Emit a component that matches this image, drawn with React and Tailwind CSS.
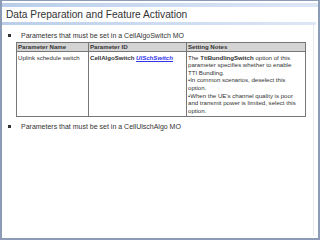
export default function App() {
    return (
        <div className="w-[320px] h-[240px] bg-white font-['Liberation_Sans',Arial,sans-serif] text-[#222] overflow-hidden">
            <div className="relative h-full border-x-2 border-b-2 border-t border-[#8c9cb6] flex flex-col">
                <div className="mt-[2px] h-[4px] bg-gradient-to-r from-[#b9cdea] via-[#cddcf2] to-[#dce6f5]" />
                <h1 className="pl-[4px] pt-[1px] text-[10.2px] leading-[13px] text-[#333]">
                    Data Preparation and Feature Activation
                </h1>
                <div className="mt-[1px] mr-[2px] h-[3px] bg-gradient-to-r from-[#b9cdea] via-[#cddcf2] to-[#dce6f5]" />

                <div className="mt-[6px] flex items-center text-[7px] leading-[9px] text-[#333]">
                    <span className="ml-[6px] mr-[10px] w-[3px] h-[3px] bg-[#333]" />
                    <span>Parameters that must be set in a CellAlgoSwitch MO</span>
                </div>

                <table className="ml-[14px] mt-[2px] w-[289px] border-collapse table-fixed text-[6.1px] leading-[7.6px] text-[#333]">
                    <colgroup>
                        <col className="w-[72px]" />
                        <col className="w-[98px]" />
                        <col className="w-[119px]" />
                    </colgroup>
                    <thead>
                        <tr className="bg-[#d4d4d4] h-[8px]">
                            <th className="border border-[#777] text-left font-bold px-[1px] py-0">Parameter Name</th>
                            <th className="border border-[#777] text-left font-bold px-[1px] py-0">Parameter ID</th>
                            <th className="border border-[#777] text-left font-bold px-[1px] py-0">Setting Notes</th>
                        </tr>
                    </thead>
                    <tbody>
                        <tr className="align-top h-[65px]">
                            <td className="border border-[#777] px-[1px] pt-[2px]">Uplink schedule switch</td>
                            <td className="border border-[#777] px-[1px] pt-[2px]">
                                <b>CellAlgoSwitch</b>{' '}
                                <b className="italic text-[#3333ee] underline">UlSchSwitch</b>
                            </td>
                            <td className="border border-[#777] px-[1px] pt-[2px] pr-[3px]">
                                The <b>TtiBundlingSwitch</b> option of this parameter specifies whether to enable TTI Bundling.
                                <br />•In common scenarios, deselect this option.
                                <br />•When the UE's channel quality is poor and transmit power is limited, select this option.
                            </td>
                        </tr>
                    </tbody>
                </table>

                <div className="mt-[5px] flex items-center text-[7px] leading-[9px] text-[#333]">
                    <span className="ml-[6px] mr-[10px] w-[3px] h-[3px] bg-[#333]" />
                    <span>Parameters that must be set in a CellUlschAlgo MO</span>
                </div>

                <div className="absolute right-[4px] top-[24px] bottom-[2px] w-px bg-[#e6e9ee]" />
            </div>
        </div>
    );
}
